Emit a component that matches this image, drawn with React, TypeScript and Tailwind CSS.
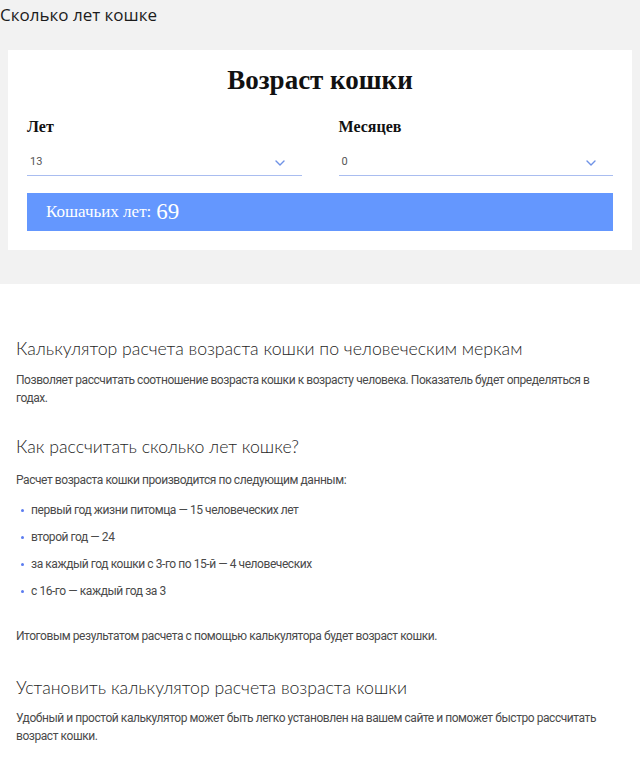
import React from 'react';

const serif = { fontFamily: '"Liberation Serif", "DejaVu Serif", serif' };
const bodyFont = "font-['Roboto',sans-serif] text-[12px] leading-[18px] tracking-[-0.44px] text-[#4a4a4a]";
const headFont = "text-[17.7px] leading-[24px] font-light text-[#262626] font-['Lato',sans-serif]";

const Chevron: React.FC = () => (
  <svg width="10" height="6" viewBox="0 0 10 6" fill="none" className="shrink-0">
    <path d="M1 1l4 4 4-4" stroke="#6f92e6" strokeWidth="1.4" strokeLinecap="round" strokeLinejoin="round" />
  </svg>
);

const SelectField: React.FC<{ label: string; value: string }> = ({ label, value }) => (
  <div className="flex flex-col">
    <div className="text-[16px] leading-[20px] font-bold text-[#111]" style={serif}>
      {label}
    </div>
    <div className="mt-[15px] flex items-center justify-between border-b-[1.5px] border-[#a9bdf0] pl-[3px] pr-[17px] h-[24px] pb-[2px]">
      <span className="text-[11px] text-[#555] font-['Roboto',sans-serif]">{value}</span>
      <Chevron />
    </div>
  </div>
);

const bullets = [
  'первый год жизни питомца — 15 человеческих лет',
  'второй год — 24',
  'за каждый год кошки с 3-го по 15-й — 4 человеческих',
  'с 16-го — каждый год за 3',
];

export default function App() {
  return (
    <div className="min-h-[776px] bg-white">
      <section className="bg-[#f2f2f2] pb-[34px]">
        <h1 className="text-[17px] leading-[30px] text-[#1c1c1c] font-['Open_Sans',sans-serif] font-normal">
          Сколько лет кошке
        </h1>
        <div className="mx-2 mt-[20px] bg-white px-[19px] pt-[12px] pb-[19px]">
          <h2 className="text-center text-[27px] leading-[36px] font-bold text-[#111]" style={serif}>
            Возраст кошки
          </h2>
          <div className="mt-[19px] grid grid-cols-2 gap-[37px]">
            <SelectField label="Лет" value="13" />
            <SelectField label="Месяцев" value="0" />
          </div>
          <div className="mt-[17px] h-[38px] bg-[#6497fe] flex items-center px-[19px] text-white" style={serif}>
            <span className="text-[17px]">Кошачьих лет:</span>
            <span className="ml-[5px] text-[23px]">69</span>
          </div>
        </div>
      </section>

      <section className="px-4 pt-[53px] pb-10">
        <h3 className={headFont}>Калькулятор расчета возраста кошки по человеческим меркам</h3>
        <p className={`mt-[10px] ${bodyFont}`}>
          Позволяет рассчитать соотношение возраста кошки к возрасту человека. Показатель будет определяться в
          <br />
          годах.
        </p>

        <h3 className={`mt-[28px] ${headFont}`}>Как рассчитать сколько лет кошке?</h3>
        <p className={`mt-[12px] ${bodyFont}`}>Расчет возраста кошки производится по следующим данным:</p>
        <ul className={`mt-[12px] flex flex-col gap-[9px] ${bodyFont}`}>
          {bullets.map((b) => (
            <li key={b} className="flex items-center">
              <span className="ml-[5px] mr-[7px] w-[3px] h-[3px] rounded-full bg-[#5b7cf0]" />
              {b}
            </li>
          ))}
        </ul>
        <p className={`mt-[27px] ${bodyFont}`}>
          Итоговым результатом расчета с помощью калькулятора будет возраст кошки.
        </p>

        <h3 className={`mt-[31px] ${headFont}`}>Установить калькулятор расчета возраста кошки</h3>
        <p className={`mt-[9px] ${bodyFont}`}>
          Удобный и простой калькулятор может быть легко установлен на вашем сайте и поможет быстро рассчитать
          <br />
          возраст кошки.
        </p>
      </section>
    </div>
  );
}
